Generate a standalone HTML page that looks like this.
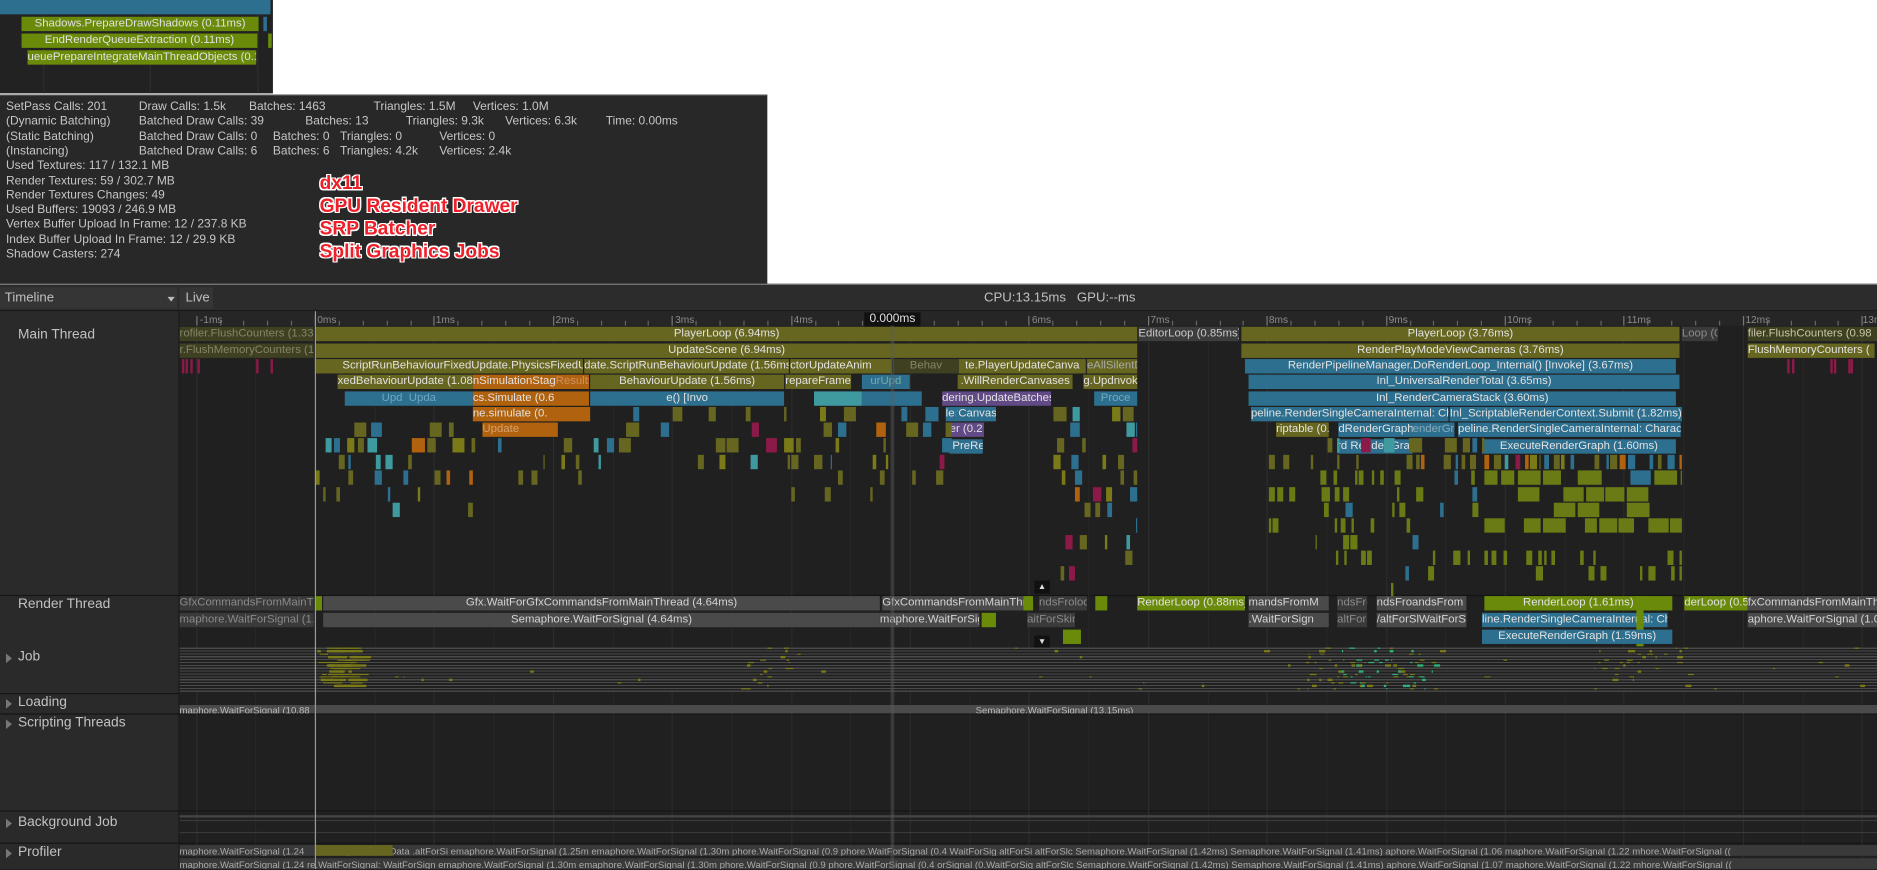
<!DOCTYPE html>
<html><head><meta charset="utf-8">
<style>
html,body{margin:0;padding:0;background:#fff;overflow:hidden;width:1877px;height:869px}
#s{position:absolute;left:0;top:0;width:1568px;height:726px;transform:scale(1.19707,1.19697);transform-origin:0 0;font-family:"Liberation Sans",sans-serif}
.a{position:absolute}
.b{position:absolute;height:12px;font-size:9.5px;line-height:12px;color:#e2e2e2;text-align:center;white-space:nowrap;overflow:hidden;box-sizing:border-box}
.O{background:#666620}.D{background:#3f3f22;color:#85856a}.B{background:#2d6f8e}.R{background:#b0620e}.P{background:#614a86}.G{background:#4a4a4a;color:#d4d4d4}.GD{background:#3a3a3a;color:#8a8a8a}.L{background:#6a8a0a}.T{background:#3f9aa0}
.st{position:absolute;font-size:10px;color:#c6c6c6;white-space:nowrap;line-height:12px}
.red{position:absolute;left:267px;font-size:16px;font-weight:bold;color:#f0202a;white-space:nowrap;text-shadow:-1px -1px 0 #fff,1px -1px 0 #fff,-1px 1px 0 #fff,1px 1px 0 #fff,0 1px 0 #fff,0 -1px 0 #fff,1px 0 0 #fff,-1px 0 0 #fff}
.lb{position:absolute;left:15px;font-size:11.5px;color:#c2c2c2;white-space:nowrap}
.tri{position:absolute;left:5px;width:0;height:0;border-top:4px solid transparent;border-bottom:4px solid transparent;border-left:5px solid #777}
.rl{position:absolute;top:262px;font-size:8.5px;color:#8c8c8c}
</style></head><body><div id="s">

<div class="a" style="left:0;top:0;width:228px;height:78px;background:#222"></div>
<div class="a" style="left:0;top:0;width:226px;height:12px;background:#2d6f8e"></div>
<div class="a" style="left:36px;top:12px;width:1px;height:66px;background:#2e2e2e"></div>
<div class="a" style="left:125px;top:12px;width:1px;height:66px;background:#2e2e2e"></div>
<div class="a" style="left:215px;top:12px;width:1px;height:66px;background:#2e2e2e"></div>
<div class="b L" style="left:18px;top:14px;width:198px;height:12px">Shadows.PrepareDrawShadows (0.11ms)</div>
<div class="b L" style="left:18px;top:28px;width:197px;height:12px">EndRenderQueueExtraction (0.11ms)</div>
<div class="b L" style="left:23px;top:42px;width:191px;height:12px;text-align:left">ueuePrepareIntegrateMainThreadObjects (0.11ms</div>
<div class="a" style="left:220px;top:14px;width:3px;height:12px;background:#2d6f8e"></div>
<div class="a" style="left:224px;top:28px;width:3px;height:12px;background:#6a8a0a"></div>

<div class="a" style="left:0;top:79px;width:641px;height:158px;background:#282828;border-top:1px solid #555"></div>
<div class="st" style="left:5px;top:84px">SetPass Calls: 201</div>
<div class="st" style="left:116px;top:84px">Draw Calls: 1.5k</div>
<div class="st" style="left:208px;top:84px">Batches: 1463</div>
<div class="st" style="left:312px;top:84px">Triangles: 1.5M</div>
<div class="st" style="left:395px;top:84px">Vertices: 1.0M</div>
<div class="st" style="left:5px;top:96.3px">(Dynamic Batching)</div>
<div class="st" style="left:116px;top:96.3px">Batched Draw Calls: 39</div>
<div class="st" style="left:255px;top:96.3px">Batches: 13</div>
<div class="st" style="left:339px;top:96.3px">Triangles: 9.3k</div>
<div class="st" style="left:422px;top:96.3px">Vertices: 6.3k</div>
<div class="st" style="left:506px;top:96.3px">Time: 0.00ms</div>
<div class="st" style="left:5px;top:108.6px">(Static Batching)</div>
<div class="st" style="left:116px;top:108.6px">Batched Draw Calls: 0</div>
<div class="st" style="left:228px;top:108.6px">Batches: 0</div>
<div class="st" style="left:284px;top:108.6px">Triangles: 0</div>
<div class="st" style="left:367px;top:108.6px">Vertices: 0</div>
<div class="st" style="left:5px;top:120.9px">(Instancing)</div>
<div class="st" style="left:116px;top:120.9px">Batched Draw Calls: 6</div>
<div class="st" style="left:228px;top:120.9px">Batches: 6</div>
<div class="st" style="left:284px;top:120.9px">Triangles: 4.2k</div>
<div class="st" style="left:367px;top:120.9px">Vertices: 2.4k</div>
<div class="st" style="left:5px;top:133.2px">Used Textures: 117 / 132.1 MB</div>
<div class="st" style="left:5px;top:145.5px">Render Textures: 59 / 302.7 MB</div>
<div class="st" style="left:5px;top:157.8px">Render Textures Changes: 49</div>
<div class="st" style="left:5px;top:170.1px">Used Buffers: 19093 / 246.9 MB</div>
<div class="st" style="left:5px;top:182.4px">Vertex Buffer Upload In Frame: 12 / 237.8 KB</div>
<div class="st" style="left:5px;top:194.7px">Index Buffer Upload In Frame: 12 / 29.9 KB</div>
<div class="st" style="left:5px;top:207px">Shadow Casters: 274</div>
<div class="red" style="top:145px">dx11</div>
<div class="red" style="top:164px">GPU Resident Drawer</div>
<div class="red" style="top:183px">SRP Batcher</div>
<div class="red" style="top:202px">Split Graphics Jobs</div>

<div class="a" style="left:0;top:237px;width:1568px;height:489px;background:#202020;border-top:1px solid #888"></div>
<div class="a" style="left:0;top:238px;width:1568px;height:21px;background:#2c2c2c;border-bottom:1px solid #1a1a1a"></div>
<div class="a" style="left:0;top:240px;width:148px;height:18px;background:#353535"></div>
<div class="a" style="left:4px;top:243px;font-size:11px;color:#c0c0c0">Timeline</div>
<div class="a" style="left:140px;top:248px;border-left:3.5px solid transparent;border-right:3.5px solid transparent;border-top:4px solid #bbb"></div>
<div class="a" style="left:150px;top:240px;width:28px;height:18px;background:#353535"></div>
<div class="a" style="left:155px;top:243px;font-size:11px;color:#c0c0c0">Live</div>
<div class="a" style="left:822px;top:243px;font-size:11px;color:#c0c0c0;white-space:nowrap">CPU:13.15ms&nbsp;&nbsp; GPU:--ms</div>

<div class="a" style="left:0;top:260px;width:149px;height:466px;background:#2a2a2a;border-right:1px solid #1a1a1a"></div>
<div class="lb" style="top:274px">Main Thread</div>
<div class="a" style="left:0;top:497px;width:1568px;height:1px;background:#151515"></div>
<div class="lb" style="top:499px">Render Thread</div>
<div class="tri" style="top:546px"></div><div class="lb" style="top:543px">Job</div>
<div class="a" style="left:0;top:579px;width:149px;height:1px;background:#151515"></div>
<div class="tri" style="top:584px"></div><div class="lb" style="top:581px">Loading</div>
<div class="a" style="left:0;top:596px;width:1568px;height:1px;background:#151515"></div>
<div class="tri" style="top:601px"></div><div class="lb" style="top:598px">Scripting Threads</div>
<div class="a" style="left:0;top:677px;width:1568px;height:1px;background:#151515"></div>
<div class="tri" style="top:684px"></div><div class="lb" style="top:681px">Background Job</div>
<div class="a" style="left:0;top:704px;width:1568px;height:1px;background:#151515"></div>
<div class="tri" style="top:709px"></div><div class="lb" style="top:706px">Profiler</div>

<div class="a" style="left:150px;top:260px;width:1418px;height:12px;background:#262626"></div>
<div id="grid"></div>
<div class="rl" style="left:167px">-1ms</div>
<div class="rl" style="left:265px">0ms</div>
<div class="rl" style="left:364px">1ms</div>
<div class="rl" style="left:464px">2ms</div>
<div class="rl" style="left:564px">3ms</div>
<div class="rl" style="left:663px">4ms</div>
<div class="rl" style="left:862px">6ms</div>
<div class="rl" style="left:961px">7ms</div>
<div class="rl" style="left:1060px">8ms</div>
<div class="rl" style="left:1160px">9ms</div>
<div class="rl" style="left:1259px">10ms</div>
<div class="rl" style="left:1359px">11ms</div>
<div class="rl" style="left:1458px">12ms</div>
<div class="rl" style="left:1556px">13ms</div>
<div class="a" style="left:722px;top:261px;width:47px;height:12px;background:#111;color:#e0e0e0;font-size:10px;text-align:center;line-height:12px">0.000ms</div>

<div class="b D" style="left:150px;top:273px;width:112px;text-align:left">rofiler.FlushCounters (1.33ms)</div>
<div class="b O" style="left:264px;top:273px;width:686px">PlayerLoop (6.94ms)</div>
<div class="b GD" style="left:951px;top:273px;width:84px;background:#3d3d3d;color:#c8c8c8">EditorLoop (0.85ms)</div>
<div class="b O" style="left:1037px;top:273px;width:366px">PlayerLoop (3.76ms)</div>
<div class="b GD" style="left:1405px;top:273px;width:30px;text-align:left">Loop (0.</div>
<div class="b D" style="left:1460px;top:273px;width:108px;text-align:left;color:#c8c8a8">filer.FlushCounters (0.98</div>
<div class="b D" style="left:150px;top:287px;width:112px;text-align:left">r.FlushMemoryCounters (1.3</div>
<div class="b O" style="left:264px;top:287px;width:686px">UpdateScene (6.94ms)</div>
<div class="b O" style="left:1037px;top:287px;width:366px">RenderPlayModeViewCameras (3.76ms)</div>
<div class="b O" style="left:1460px;top:287px;width:106px;text-align:left">FlushMemoryCounters (</div>

<div class="b O" style="left:264px;top:300px;width:223px;text-align:left;padding-left:22px">ScriptRunBehaviourFixedUpdate.PhysicsFixedUpdate</div>
<div class="b O" style="left:488px;top:300px;width:171px;text-align:left">date.ScriptRunBehaviourUpdate (1.56ms</div>
<div class="b O" style="left:660px;top:300px;width:85px;text-align:left">ctorUpdateAnim</div>
<div class="b D" style="left:746px;top:300px;width:55px">Behav</div>
<div class="b O" style="left:801px;top:300px;width:106px">te.PlayerUpdateCanva</div>
<div class="b O" style="left:908px;top:300px;width:42px;color:#aaa">eAllSilentDrawe</div>
<div class="b B" style="left:1040px;top:300px;width:360px">RenderPipelineManager.DoRenderLoop_Internal() [Invoke] (3.67ms)</div>

<div class="b O" style="left:282px;top:313px;width:113px;text-align:left">xedBehaviourUpdate (1.08ms</div>
<div class="b R" style="left:395px;top:313px;width:97px;text-align:left">nSimulationStag<span style="color:#d09060">Results</span></div>
<div class="b O" style="left:493px;top:313px;width:162px">BehaviourUpdate (1.56ms)</div>
<div class="b O" style="left:656px;top:313px;width:55px;text-align:left">repareFrame</div>
<div class="b B" style="left:720px;top:313px;width:40px;color:#7aa">urUpd</div>
<div class="b O" style="left:800px;top:313px;width:96px">.WillRenderCanvases</div>
<div class="b O" style="left:905px;top:313px;width:45px;text-align:left">g.Updnvoke() [</div>
<div class="b B" style="left:1043px;top:313px;width:360px">Inl_UniversalRenderTotal (3.65ms)</div>

<div class="b B" style="left:288px;top:327px;width:107px;color:#6fa6c0">Upd&nbsp; Upda</div>
<div class="b R" style="left:395px;top:327px;width:97px;text-align:left">cs.Simulate (0.6</div>
<div class="b B" style="left:493px;top:327px;width:162px">e() [Invo</div>
<div class="b T" style="left:680px;top:327px;width:40px"></div>
<div class="b B" style="left:720px;top:327px;width:50px"></div>
<div class="b P" style="left:787px;top:327px;width:91px">dering.UpdateBatches</div>
<div class="b B" style="left:914px;top:327px;width:36px;color:#7ab">Proce</div>
<div class="b B" style="left:1043px;top:327px;width:357px">Inl_RenderCameraStack (3.60ms)</div>

<div class="b R" style="left:395px;top:340px;width:98px;text-align:left">ne.simulate (0.</div>
<div class="b B" style="left:790px;top:340px;width:42px">lerCanvases</div>
<div class="b B" style="left:1045px;top:340px;width:165px;text-align:left">peline.RenderSingleCameraInternal: Chara</div>
<div class="b B" style="left:1211px;top:340px;width:194px">Inl_ScriptableRenderContext.Submit (1.82ms)</div>

<div class="b R" style="left:403px;top:353px;width:63px;text-align:left;color:#d8a070">Update</div>
<div class="b P" style="left:790px;top:353px;width:32px">ler (0.2</div>
<div class="b O" style="left:1066px;top:353px;width:44px;text-align:left">riptable (0.</div>
<div class="b B" style="left:1118px;top:353px;width:62px;text-align:left">dRenderGraph</div>
<div class="b B" style="left:1180px;top:353px;width:35px;color:#8ab">enderGr</div>
<div class="b B" style="left:1218px;top:353px;width:186px;text-align:left">peline.RenderSingleCameraInternal: Charac</div>

<div class="b B" style="left:793px;top:367px;width:28px">.PreRe</div>
<div class="b B" style="left:1117px;top:367px;width:63px;text-align:left">rd Render Grap</div>
<div class="b B" style="left:1238px;top:367px;width:162px">ExecuteRenderGraph (1.60ms)</div>

<div id="clutter"></div>

<div class="b GD" style="left:150px;top:498px;width:112px;text-align:left">GfxCommandsFromMainThre</div>
<div class="b L" style="left:263px;top:498px;width:6px"></div>
<div class="b G" style="left:270px;top:498px;width:465px">Gfx.WaitForGfxCommandsFromMainThread (4.64ms)</div>
<div class="b G" style="left:737px;top:498px;width:118px;text-align:left">GfxCommandsFromMainThre</div>
<div class="b L" style="left:855px;top:498px;width:8px"></div>
<div class="b GD" style="left:868px;top:498px;width:40px;text-align:left">ndsFroloop (</div>
<div class="b L" style="left:915px;top:498px;width:10px"></div>
<div class="b L" style="left:950px;top:498px;width:90px">RenderLoop (0.88ms)</div>
<div class="b G" style="left:1043px;top:498px;width:67px;text-align:left">mandsFromM</div>
<div class="b GD" style="left:1117px;top:498px;width:25px;text-align:left">ndsFro</div>
<div class="b G" style="left:1150px;top:498px;width:75px;text-align:left">ndsFroandsFrom</div>
<div class="b L" style="left:1240px;top:498px;width:157px">RenderLoop (1.61ms)</div>
<div class="b L" style="left:1407px;top:498px;width:53px;text-align:left">derLoop (0.56</div>
<div class="b G" style="left:1460px;top:498px;width:108px;text-align:left">fxCommandsFromMainThr</div>

<div class="b GD" style="left:150px;top:512px;width:112px;text-align:left">maphore.WaitForSignal (1.42</div>
<div class="b G" style="left:270px;top:512px;width:465px">Semaphore.WaitForSignal (4.64ms)</div>
<div class="b G" style="left:735px;top:512px;width:83px;text-align:left">maphore.WaitForSignal (1.18m</div>
<div class="b L" style="left:820px;top:512px;width:12px"></div>
<div class="b GD" style="left:858px;top:512px;width:40px;text-align:left">aitForSkinO</div>
<div class="b G" style="left:1043px;top:512px;width:67px;text-align:left">.WaitForSign</div>
<div class="b GD" style="left:1117px;top:512px;width:25px">altForS</div>
<div class="b G" style="left:1150px;top:512px;width:75px;text-align:left">/altForSlWaitForSig</div>
<div class="b B" style="left:1238px;top:512px;width:155px;text-align:left">line.RenderSingleCameraInternal: Chara</div>
<div class="b G" style="left:1460px;top:512px;width:108px;text-align:left">aphore.WaitForSignal (1.03</div>
<div class="b L" style="left:888px;top:526px;width:15px"></div>
<div class="b L" style="left:1367px;top:498px;width:6px;height:42px"></div>
<div class="b B" style="left:1238px;top:526px;width:159px">ExecuteRenderGraph (1.59ms)</div>
<div class="a" style="left:864px;top:485px;width:13px;height:11px;background:#111;color:#ddd;font-size:7px;text-align:center;line-height:11px">▲</div>
<div class="a" style="left:864px;top:531px;width:13px;height:11px;background:#111;color:#ddd;font-size:7px;text-align:center;line-height:11px">▼</div>

<div class="a" style="left:150px;top:541px;width:1418px;height:37px;background:repeating-linear-gradient(#4a4a4a 0 1px,#202020 1px 2.4px)"></div>
<div id="jobs"></div>
<div class="a" style="left:150px;top:589px;width:1418px;height:7px;background:#4a4a4a;overflow:hidden;font-size:8px;color:#bbb;line-height:10px"><span style="position:absolute;left:0">maphore.WaitForSignal (10.88</span><span style="position:absolute;left:665px">Semaphore.WaitForSignal (13.15ms)</span></div>
<div class="a" style="left:150px;top:681px;width:1418px;height:2px;background:#444"></div>
<div class="a" style="left:150px;top:685px;width:1418px;height:1px;background:#3a3a3a"></div>
<div class="a" style="left:150px;top:695px;width:1418px;height:1px;background:#3a3a3a"></div>
<div class="a" style="left:150px;top:706px;width:1418px;height:9px;background:#3a3a3a;overflow:hidden;font-size:8px;color:#aaa;white-space:nowrap;line-height:11px">maphore.WaitForSignal (1.24&nbsp;&nbsp;&nbsp;&nbsp;&nbsp;&nbsp;&nbsp;&nbsp;&nbsp;&nbsp;&nbsp;&nbsp;&nbsp;&nbsp;&nbsp; yncGlobalData .altForSi emaphore.WaitForSignal (1.25m emaphore.WaitForSignal (1.30m phore.WaitForSignal (0.9 phore.WaitForSignal (0.4 WaitForSig altForSi altForSlc Semaphore.WaitForSignal (1.42ms) Semaphore.WaitForSignal (1.41ms) aphore.WaitForSignal (1.06 maphore.WaitForSignal (1.22 mhore.WaitForSignal ((</div>
<div class="a" style="left:264px;top:706px;width:64px;height:9px;background:#666620"></div>
<div class="a" style="left:150px;top:717px;width:1418px;height:9px;background:#3a3a3a;overflow:hidden;font-size:8px;color:#aaa;white-space:nowrap;line-height:11px">maphore.WaitForSignal (1.24 re.WaitForSignal: WaitForSign emaphore.WaitForSignal (1.30m emaphore.WaitForSignal (1.30m phore.WaitForSignal (0.9 phore.WaitForSignal (0.4 orSignal (0.WaitForSig altForSlc Semaphore.WaitForSignal (1.42ms) Semaphore.WaitForSignal (1.41ms) aphore.WaitForSignal (1.07 maphore.WaitForSignal (1.22 mhore.WaitForSignal ((</div>
<div class="a" style="left:263px;top:260px;width:1px;height:466px;background:#9a9a9a"></div>
<div class="a" style="left:744px;top:272px;width:3px;height:454px;background:rgba(90,90,90,.45)"></div>
</div>
<script>
(function(){
var s=7;function r(){s=(s*16807)%2147483647;return (s-1)/2147483646;}
var g=document.getElementById('grid'),h='';
for(var i=-1;i<=13;i++){var x=263+i*99.4;
 if(x>150)h+='<div class="a" style="left:'+x+'px;top:272px;width:1px;height:454px;background:#2c2c2c"></div><div class="a" style="left:'+x+'px;top:264px;width:1px;height:8px;background:#777"></div>';
 for(var k=1;k<5;k++){var xx=x+k*19.9;if(xx>150&&xx<1568)h+='<div class="a" style="left:'+xx+'px;top:268px;width:1px;height:4px;background:#666"></div>';}
 var xh=x+49.7;if(xh>150&&xh<1568)h+='<div class="a" style="left:'+xh+'px;top:272px;width:1px;height:454px;background:#262626"></div>';}
g.innerHTML=h;
var cols=['#666620','#666620','#666620','#666620','#7a7a18','#2d6f8e','#2d6f8e','#b0620e','#8c1a48','#3f9aa0'];
var c='',regs=[[264,395,6,12,.55],[395,500,7,11,.3],[500,660,5,9,.35],[655,740,5,11,.55],[740,800,5,10,.4],[880,950,5,16,.65],[1060,1240,7,17,.6],[1240,1405,8,16,.85]];
regs.forEach(function(R){for(var row=R[2];row<R[3];row++){var y=273+row*13.35;var p=(1-(row-R[2])/(R[3]-R[2]+1))*R[4];var x=R[0];
 while(x<R[1]){var big=R[0]>=1240&&row>=9&&row<14;var w=big?(6+r()*14):(1.5+r()*(row<8?10:5));if(r()<p){var col=cols[Math.floor(r()*cols.length)];if(R[0]>=1060&&row>=9)col=r()<.85?'#6a7a14':'#2d6f8e';
 c+='<div class="a" style="left:'+x+'px;top:'+y+'px;width:'+Math.min(w,R[1]-x)+'px;height:12px;background:'+col+'"></div>';}x+=w+1+r()*(big?2:5);}}});
[[150,262],[1460,1566]].forEach(function(R){for(var n=0;n<6;n++){c+='<div class="a" style="left:'+(R[0]+r()*(R[1]-R[0]))+'px;top:300px;width:2px;height:12px;background:#8c1a48"></div>';}});
document.getElementById('clutter').innerHTML=c;
var j='';
for(var n=0;n<260;n++){var x,cl;var q=r();
 if(q<.25)x=265+r()*30;else if(q<.35)x=620+r()*40;else if(q<.7)x=1090+r()*110;else if(q<.85)x=1330+r()*80;else x=270+r()*1290;
 cl=(x>1120&&x<1200&&r()<.5)?'#2fb07a':'#7a7a18';
 j+='<div class="a" style="left:'+x+'px;top:'+(541+Math.floor(r()*15)*2.4)+'px;width:'+(1+r()*(x<300?18:4))+'px;height:1.4px;background:'+cl+'"></div>';}
document.getElementById('jobs').innerHTML=j;
})();
</script>
</body></html>
